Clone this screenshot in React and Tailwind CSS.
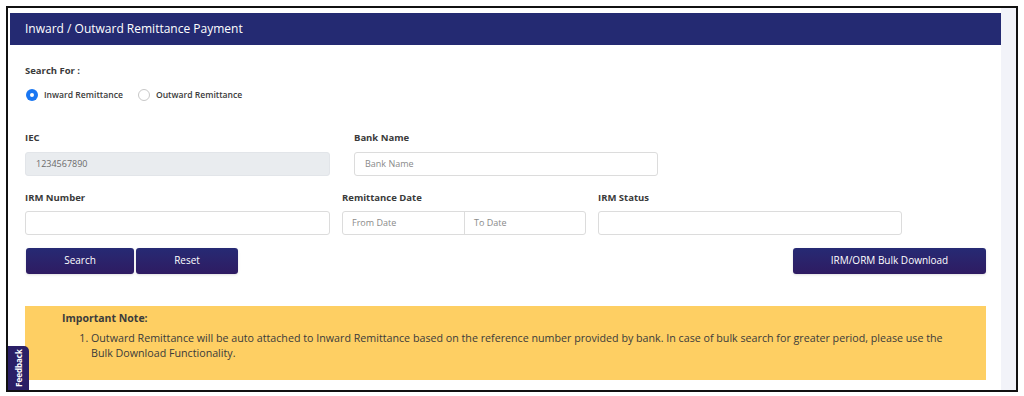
import { useState } from 'react';

const font = { fontFamily: '"Open Sans", "Noto Sans", sans-serif' };

const Label = ({ children }) => (
  <div className="text-[9.5px] font-bold text-[#3a3a3a] leading-[12px] h-[12px]">{children}</div>
);

const Radio = ({ checked, label, onClick }) => (
  <button type="button" onClick={onClick} className="flex items-center gap-[6px]">
    {checked ? (
      <span className="w-[12px] h-[12px] rounded-full bg-[#1976f2] flex items-center justify-center">
        <span className="w-[4px] h-[4px] rounded-full bg-white"></span>
      </span>
    ) : (
      <span className="w-[12px] h-[12px] rounded-full border border-[#c8c8c8] bg-white"></span>
    )}
    <span className="text-[8.6px] font-semibold text-[#3a3a3a]">{label}</span>
  </button>
);

const Btn = ({ children, className = '' }) => (
  <button
    type="button"
    className={`h-[26px] rounded-[3px] bg-gradient-to-b from-[#262a74] to-[#2e1b62] text-white text-[10px] shadow-sm ${className}`}
  >
    {children}
  </button>
);

export default function App() {
  const [mode, setMode] = useState('inward');

  return (
    <div className="w-[1024px] h-[396px] bg-white relative overflow-hidden" style={font}>
      <div className="absolute left-[6px] top-[6px] w-[1012px] h-[386px] border-2 border-[#111] flex overflow-hidden">
        <div className="flex-1 pl-[2px] pt-[5px] bg-white">
          <div className="w-[991px]">
            <div className="h-[32px] bg-[#242a72] flex items-center px-[15px]">
              <span className="text-white text-[12px]">Inward / Outward Remittance Payment</span>
            </div>
            <div className="px-[15px] pt-[20px]">
              <div className="text-[9.5px] font-bold text-[#3a3a3a] leading-[12px]">Search For :</div>
              <div className="flex items-center gap-[15px] mt-[12px] pl-[1px]">
                <Radio checked={mode === 'inward'} label="Inward Remittance" onClick={() => setMode('inward')} />
                <Radio checked={mode === 'outward'} label="Outward Remittance" onClick={() => setMode('outward')} />
              </div>

              <div className="flex mt-[30px]">
                <div className="w-[305px]">
                  <Label>IEC</Label>
                  <div className="mt-[8px] h-[24px] w-[305px] rounded-[3px] bg-[#e9ecef] border border-[#e2e5e9] flex items-center px-[10px] text-[9px] text-[#6b6b6b]">
                    1234567890
                  </div>
                </div>
                <div className="w-[304px] ml-[24px]">
                  <Label>Bank Name</Label>
                  <input
                    placeholder="Bank Name"
                    className="mt-[8px] h-[24px] w-[304px] rounded-[3px] border border-[#dcdcdc] px-[10px] text-[9px] text-[#555] placeholder:text-[#8a8a8a] outline-none"
                  />
                </div>
              </div>

              <div className="flex mt-[16px]">
                <div className="w-[305px]">
                  <Label>IRM Number</Label>
                  <input className="mt-[7px] h-[24px] w-[305px] rounded-[3px] border border-[#dcdcdc] px-[10px] text-[9px] outline-none" />
                </div>
                <div className="w-[244px] ml-[12px]">
                  <Label>Remittance Date</Label>
                  <div className="mt-[7px] h-[24px] w-[244px] rounded-[3px] border border-[#dcdcdc] flex text-[9px] text-[#8a8a8a]">
                    <div className="w-[122px] border-r border-[#dcdcdc] flex items-center px-[9px]">From Date</div>
                    <div className="flex-1 flex items-center px-[9px]">To Date</div>
                  </div>
                </div>
                <div className="w-[304px] ml-[12px]">
                  <Label>IRM Status</Label>
                  <input className="mt-[7px] h-[24px] w-[304px] rounded-[3px] border border-[#dcdcdc] px-[10px] text-[9px] outline-none" />
                </div>
              </div>

              <div className="flex mt-[13px] pl-[1px]">
                <Btn className="w-[108px]">Search</Btn>
                <Btn className="w-[102px] ml-[2px]">Reset</Btn>
                <Btn className="w-[193px] ml-auto">IRM/ORM Bulk Download</Btn>
              </div>

              <div className="mt-[32px] h-[74px] bg-[#fecf63] pl-[37px] pt-[5px] text-[#3b3b3b]">
                <div className="text-[10.5px] font-bold leading-[14px]">Important Note:</div>
                <ol className="mt-[6px] pl-[29px] list-decimal text-[10.7px] leading-[15px] pr-[40px]">
                  <li>
                    Outward Remittance will be auto attached to Inward Remittance based on the reference number provided by bank. In case of bulk search for greater period, please use the Bulk Download Functionality.
                  </li>
                </ol>
              </div>
            </div>
          </div>
        </div>
        <div className="w-[15px] bg-[#f2f3f9]"></div>
        <div className="absolute left-0 bottom-0 w-[21px] h-[44px] bg-[#2a1f66] rounded-tr-[5px] overflow-hidden flex items-center justify-center">
          <span className="text-white text-[8px] font-bold whitespace-nowrap -rotate-90 leading-none">Feedback</span>
        </div>
      </div>
    </div>
  );
}
